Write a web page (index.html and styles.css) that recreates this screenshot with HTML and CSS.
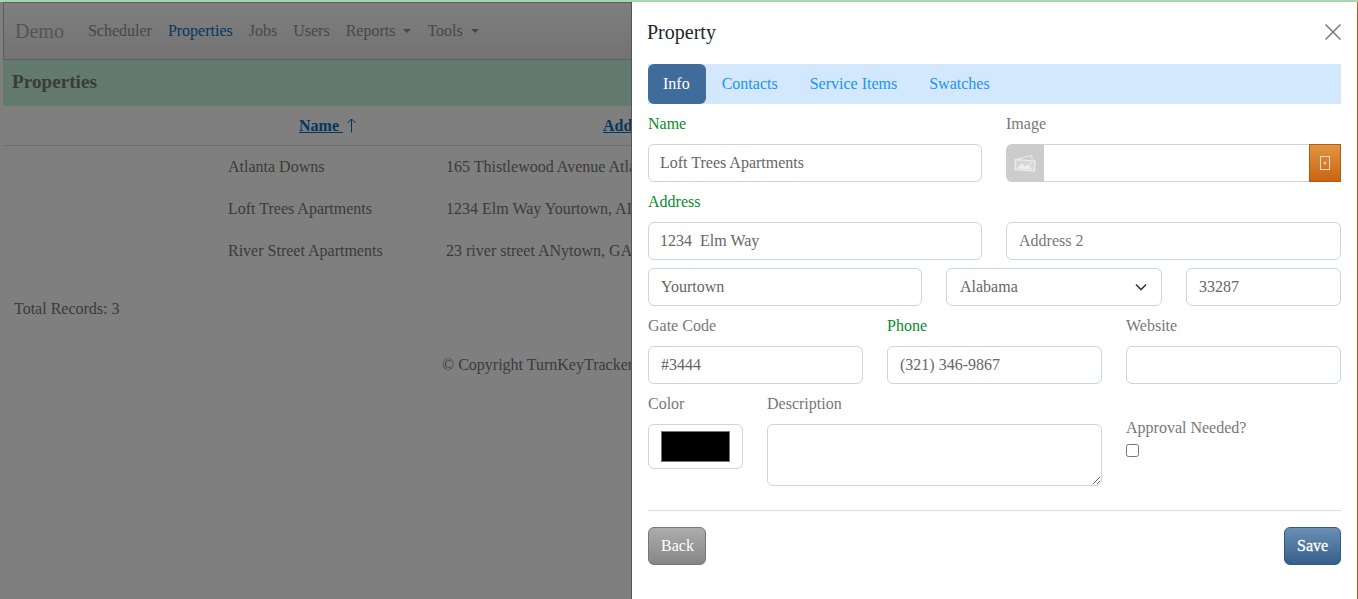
FILE: index.html
```html
<!DOCTYPE html>
<html lang="en">
<head>
<meta charset="utf-8">
<title>Properties</title>
<link rel="stylesheet" href="styles.css">
</head>
<body>
<div class="page">
  <nav class="navbar">
    <a class="brand">Demo</a>
    <a class="nav-link">Scheduler</a>
    <a class="nav-link active">Properties</a>
    <a class="nav-link">Jobs</a>
    <a class="nav-link">Users</a>
    <a class="nav-link caret">Reports</a>
    <a class="nav-link caret">Tools</a>
  </nav>
  <div class="title-bar">Properties</div>
  <div class="table-head">
    <a class="col-name">Name&nbsp;</a>
    <svg class="arrow" viewBox="0 0 11 15" width="11" height="15"><path d="M5.5 14.5V1M1.5 5 5.5 1l4 4" fill="none" stroke="#0a6ebd" stroke-width="1"/></svg>
    <a class="col-addr">Add</a>
  </div>
  <div class="row"><span class="cell-name">Atlanta Downs</span><span class="cell-addr">165 Thistlewood Avenue Atlanta</span></div>
  <div class="row"><span class="cell-name">Loft Trees Apartments</span><span class="cell-addr">1234 Elm Way Yourtown, AL</span></div>
  <div class="row"><span class="cell-name">River Street Apartments</span><span class="cell-addr">23 river street ANytown, GA</span></div>
  <div class="total">Total Records: 3</div>
  <div class="copyright">© Copyright TurnKeyTracker</div>
</div>
<div class="backdrop"></div>
<aside class="panel">
  <header class="panel-head">
    <h5>Property</h5>
    <svg class="close" viewBox="0 0 16 16" width="16" height="16"><path d="M0.5 0.5 15.5 15.5M15.5 0.5 0.5 15.5" fill="none" stroke="#7a7a7a" stroke-width="1.5"/></svg>
  </header>
  <div class="tabs">
    <a class="tab on">Info</a>
    <a class="tab">Contacts</a>
    <a class="tab">Service Items</a>
    <a class="tab">Swatches</a>
  </div>
  <div class="form-row two">
    <div class="field">
      <label class="req">Name</label>
      <input class="ctl nudge" value="Loft Trees Apartments">
    </div>
    <div class="field">
      <label>Image</label>
      <div class="file-group">
        <span class="file-icon">
          <svg viewBox="0 0 22 18" width="22" height="18"><path d="M3.5 5 17 1.5 18.5 5" fill="none" stroke="#e8e8e8" stroke-width="1.2"/><path d="M1.5 5.5 21 7 20.5 17 1 15.5z" fill="#d6d6d6" stroke="#eeeeee" stroke-width="1.2"/><path d="M3 14.5 8 9.5l3 3 3-2 4.5 5z" fill="#eeeeee"/><circle cx="16.5" cy="9.5" r="1" fill="#eeeeee"/></svg>
        </span>
        <span class="file-input"></span>
        <span class="file-btn">
          <svg viewBox="0 0 10 14" width="10" height="14"><rect x="0.5" y="0.5" width="9" height="13" fill="none" stroke="#f5dcc0"/><circle cx="5" cy="7" r="1.5" fill="#f0c49a"/></svg>
        </span>
      </div>
    </div>
  </div>
  <label class="req addr-label">Address</label>
  <div class="form-row two tight">
    <input class="ctl nudge" value="1234  Elm Way">
    <input class="ctl" placeholder="Address 2">
  </div>
  <div class="form-row city">
    <input class="ctl" value="Yourtown">
    <div class="ctl select">Alabama
      <svg viewBox="0 0 12 8" width="12" height="8"><path d="M1 1.5 6 6.5 11 1.5" fill="none" stroke="#343a40" stroke-width="1.6"/></svg>
    </div>
    <input class="ctl" value="33287">
  </div>
  <div class="form-row three">
    <div class="field">
      <label>Gate Code</label>
      <input class="ctl" value="#3444">
    </div>
    <div class="field">
      <label class="req">Phone</label>
      <input class="ctl" value="(321) 346-9867">
    </div>
    <div class="field">
      <label>Website</label>
      <input class="ctl">
    </div>
  </div>
  <div class="form-row last">
    <div class="field color-field">
      <label>Color</label>
      <div class="color-box"><span class="swatch"></span></div>
    </div>
    <div class="field desc-field">
      <label>Description</label>
      <textarea class="ctl area"></textarea>
    </div>
    <div class="field approve-field">
      <label>Approval Needed?</label>
      <input class="check" type="checkbox">
    </div>
  </div>
  <hr class="rule">
  <footer class="actions">
    <button class="btn back">Back</button>
    <button class="btn save">Save</button>
  </footer>
</aside>
<div class="topline"></div>
</body>
</html>
```
FILE: styles.css
```css
* { box-sizing: border-box; }
html, body { margin: 0; height: 100%; overflow: hidden; }
body {
  font-family: "Liberation Serif", "Times New Roman", serif;
  font-size: 16px;
  color: #212529;
  background: #fff;
}
.page { padding: 2px 0 0 3px; height: 599px; }
.navbar {
  display: flex;
  align-items: center;
  height: 58px;
  padding: 0 11px;
  border: 1px solid #bbb;
  background: linear-gradient(#fff, #e6e6e6);
}
.brand { font-size: 20px; color: #aaa; margin-right: 16px; }
.nav-link { padding: 0 8px; color: #909090; }
.nav-link.active { color: #0a6ebd; }
.caret::after {
  content: "";
  display: inline-block;
  margin-left: 8px;
  vertical-align: 3px;
  border-top: 4px solid #909090;
  border-left: 4px solid transparent;
  border-right: 4px solid transparent;
}
.title-bar {
  height: 46px;
  padding: 0 9px 2px;
  display: flex;
  align-items: center;
  background: #c6f4dc;
  font-size: 19.2px;
  font-weight: 700;
  color: #777;
}
.table-head {
  display: flex;
  height: 40px;
  align-items: center;
  border-bottom: 1px solid #ddd;
  font-weight: 700;
}
.table-head a { color: #0a6ebd; text-decoration: underline; }
.col-name { margin-left: 296px; }
.arrow { margin-left: 3px; }
.col-addr { margin-left: 246px; }
.row { display: flex; height: 42px; align-items: center; color: #777; }
.cell-name { width: 218px; margin-left: 225px; }
.cell-addr { white-space: nowrap; }
.total { margin: 28px 0 0 11px; height: 24px; color: #777; }
.copyright { margin: 32px 0 0 439px; color: #777; white-space: nowrap; }
.backdrop { position: fixed; inset: 0; background: rgba(0, 0, 0, 0.5); }
.topline { position: fixed; top: 0; left: 0; right: 0; height: 2px; background: #a9d6ae; }
.panel {
  position: fixed;
  top: 2px;
  right: 0;
  bottom: 0;
  width: 727px;
  padding: 0 16px;
  background: #fff;
  border-left: 1px solid #555;
  border-right: 1px solid #a8602c;
}
.panel-head {
  display: flex;
  align-items: center;
  justify-content: space-between;
  height: 62px;
  padding-bottom: 2px;
}
.panel-head h5 { margin: 0 0 0 -1px; font-size: 20px; font-weight: 400; color: #212529; }
.tabs { display: flex; height: 40px; background: #d3e8fc; }
.tab { display: flex; align-items: center; padding: 0 16px; color: #1b93f5; }
.tab.on { padding-left: 15px; background: #406c9c; color: #fff; border-radius: 6px; }
.form-row { display: grid; }
.two { grid-template-columns: 334px 335px; column-gap: 24px; }
.field { display: flex; flex-direction: column; }
label { display: block; height: 24px; margin-top: 8px; color: #777; line-height: 24px; }
label.req { color: #0a8a2a; }
.field label { margin-bottom: 8px; }
.ctl {
  display: block;
  width: 100%;
  height: 38px;
  padding: 0 12px;
  font: inherit;
  color: #666;
  background: #fff;
  border: 1px solid #ced4da;
  border-radius: 6px;
  outline: 0;
}
.ctl.nudge { padding-left: 11px; }
.ctl::placeholder { color: #777; opacity: 1; }
.file-group { display: flex; height: 38px; }
.file-icon {
  display: flex;
  align-items: center;
  justify-content: center;
  width: 38px;
  background: #ccc;
  border-radius: 6px 0 0 6px;
}
.file-input { flex: 1; border: solid #ced4da; border-width: 1px 0; }
.file-btn {
  display: flex;
  align-items: center;
  justify-content: center;
  width: 32px;
  background: linear-gradient(#e29440, #c96414);
  border: 1px solid #b35c14;
}
.addr-label { margin-top: 8px; height: 24px; margin-bottom: 8px; }
.tight { margin-bottom: 8px; }
.city { grid-template-columns: 274px 216px 155px; column-gap: 24px; }
.three { grid-template-columns: 215px 215px 215px; column-gap: 24px; }
.last { grid-template-columns: 95px 335px 215px; column-gap: 24px; }
.select { display: flex; align-items: center; justify-content: space-between; padding: 0 14px 0 13px; }
.color-box {
  display: flex;
  align-items: center;
  justify-content: center;
  height: 45px;
  border: 1px solid #ced4da;
  border-radius: 6px;
}
.swatch { width: 69px; height: 31px; background: #000; border: 1px solid #767676; }
.area { height: 62px; padding: 6px 12px; resize: vertical; }
.approve-field label { margin-top: 32px; margin-bottom: 0; }
.check { width: 13px; height: 13px; margin: 4px 0 0; }
.rule { margin: 24px 0 16px; border: 0; border-top: 1px solid #dcdcdc; }
.actions { display: flex; justify-content: space-between; }
.btn {
  height: 38px;
  padding: 0 12px;
  font: inherit;
  color: #fff;
  border-radius: 6px;
  cursor: pointer;
}
.back { width: 58px; background: linear-gradient(#acacac, #868686); border: 1px solid #777; }
.save { width: 57px; -webkit-text-stroke: 0.3px #fff; background: linear-gradient(#6b8fb5, #355f8a); border: 1px solid #2f5a85; }
```
